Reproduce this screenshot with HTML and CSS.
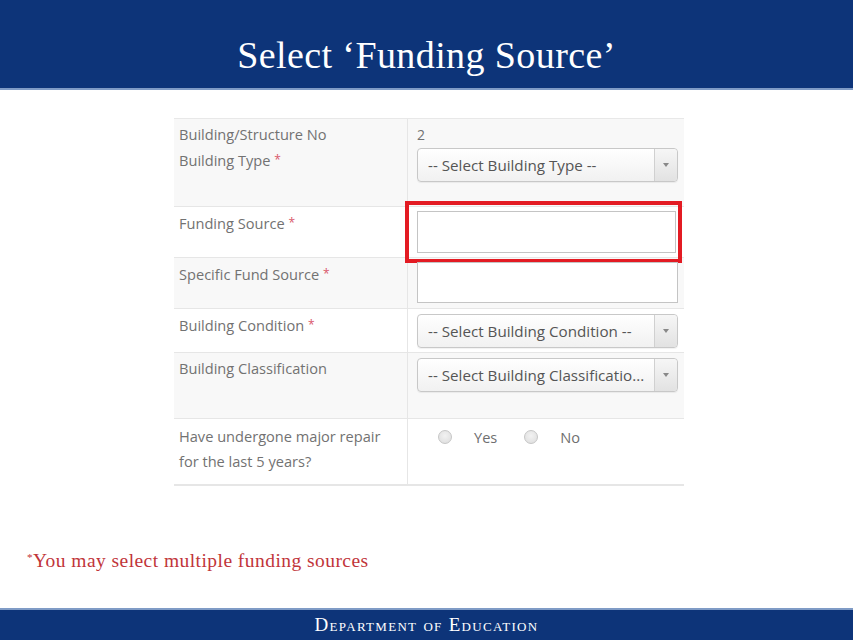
FILE: index.html
```html
<!DOCTYPE html>
<html>
<head>
<meta charset="utf-8">
<link rel="stylesheet" href="styles.css">
</head>
<body>
<div class="slide">
  <header class="top">
    <h1 class="title">Select ‘Funding Source’</h1>
  </header>
  <main class="content">
    <div class="form">
      <div class="row r1 shade">
        <div class="label">Building/Structure No<br>Building Type <span class="req">*</span></div>
        <div class="value">
          <div class="num">2</div>
          <div class="select"><span class="sel-text">-- Select Building Type --</span><span class="arrow"></span></div>
        </div>
      </div>
      <div class="row r2">
        <div class="label">Funding Source <span class="req">*</span></div>
        <div class="value">
          <div class="input tall"></div>
          <div class="highlight"></div>
        </div>
      </div>
      <div class="row r3 shade">
        <div class="label">Specific Fund Source <span class="req">*</span></div>
        <div class="value"><div class="input"></div></div>
      </div>
      <div class="row r4">
        <div class="label">Building Condition <span class="req">*</span></div>
        <div class="value"><div class="select"><span class="sel-text">-- Select Building Condition --</span><span class="arrow"></span></div></div>
      </div>
      <div class="row r5 shade">
        <div class="label">Building Classification</div>
        <div class="value"><div class="select"><span class="sel-text">-- Select Building Classificatio...</span><span class="arrow"></span></div></div>
      </div>
      <div class="row r6">
        <div class="label last">Have undergone major repair<br>for the last 5 years?</div>
        <div class="value radios">
          <span class="radio"></span><span class="rlabel yes">Yes</span>
          <span class="radio"></span><span class="rlabel">No</span>
        </div>
      </div>
    </div>
    <p class="note"><sup class="star">*</sup>You may select multiple funding sources</p>
  </main>
  <footer class="bottom">
    <span class="dept">Department of Education</span>
  </footer>
</div>
</body>
</html>
```

FILE: styles.css
```css
html, body { margin: 0; padding: 0; background: #fff; }
.slide { width: 853px; height: 640px; display: flex; flex-direction: column; overflow: hidden; }
.top {
  height: 88px;
  background: #0d3479;
  border-bottom: 2px solid #7f9bc6;
  display: flex; align-items: center; justify-content: center;
}
.title {
  margin: 0; padding-top: 22px;
  font-family: "Liberation Serif", serif;
  font-weight: normal;
  font-size: 38px;
  color: #fff;
  letter-spacing: 0.4px;
}
.content { flex: 1; display: flex; flex-direction: column; }
.form {
  margin: 28px 0 0 174px;
  width: 510px;
  border-top: 1px solid #e8e8e8;
  border-bottom: 2px solid #e6e6e6;
  font-family: "Open Sans", sans-serif;
  font-size: 14.6px;
  color: #727272;
}
.row { display: grid; grid-template-columns: 234px 276px; border-bottom: 1px solid #e6e6e6; }
.row:last-child { border-bottom: none; }
.shade { background: #f8f8f8; }
.label { padding: 3px 0 0 5px; line-height: 25px; border-right: 1px solid #e6e6e6; white-space: nowrap; }
.req { color: #d9576a; font-size: 12px; vertical-align: 2px; }
.value { padding: 0 6px 0 9px; position: relative; }
.r1 { height: 87px; }
.r1 .value { padding-top: 4px; }
.num { line-height: 24px; height: 25px; font-size: 14px; }
.r2 { height: 50px; }
.r2 .value { padding-top: 4px; }
.r3 { height: 50px; }
.r3 .value { padding-top: 4px; }
.r4 { height: 43px; }
.r4 .value { padding-top: 5px; }
.r5 { height: 65px; }
.r5 .value { padding-top: 5px; }
.r6 { height: 65px; }
.label.last { padding-top: 5px; }
.select {
  height: 32px;
  border: 1px solid #c8c8c8;
  border-radius: 4px;
  background: linear-gradient(#ffffff, #f1f1f1);
  display: flex; align-items: center;
  box-shadow: 0 1px 1px rgba(0,0,0,0.06);
  font-size: 15.2px;
}
.sel-text { flex: 1; padding-left: 10px; color: #555; white-space: nowrap; overflow: hidden; }
.arrow {
  width: 22px; height: 100%;
  border-left: 1px solid #d0d0d0;
  background: linear-gradient(#f6f6f6, #e2e2e2);
  border-radius: 0 4px 4px 0;
  display: flex; align-items: center; justify-content: center;
}
.arrow::after {
  content: ""; border-left: 3px solid transparent; border-right: 3px solid transparent;
  border-top: 4px solid #888;
}
.input { height: 39px; border: 1px solid #c4c4c4; background: #fff; }
.input.tall { height: 40px; width: 257px; }
.highlight {
  position: absolute; left: -3px; top: -6px;
  width: 269px; height: 54px;
  border: 4px solid #e31b23;
}
.radios { display: flex; align-items: center; height: 36px; padding-left: 30px; }
.radio {
  width: 12px; height: 12px; border-radius: 50%;
  border: 1px solid #c6c6c6;
  background: radial-gradient(circle at 50% 40%, #f2f2f2, #dcdcdc);
}
.rlabel { margin-left: 22px; color: #6f6f6f; }
.rlabel.yes { margin-right: 27px; }
.note {
  margin: 64px 0 0 27px;
  font-family: "Liberation Serif", serif;
  font-size: 19.5px;
  letter-spacing: 0.45px;
  color: #c1353a;
}
.star { font-size: 11px; vertical-align: 6px; line-height: 0; }
.bottom {
  height: 30px;
  background: #0d3479;
  border-top: 2px solid #7f9bc6;
  display: flex; align-items: center; justify-content: center;
}
.dept {
  font-family: "Liberation Serif", serif;
  font-variant: small-caps;
  font-size: 19px;
  color: #fff;
  letter-spacing: 1.3px;
}
```
